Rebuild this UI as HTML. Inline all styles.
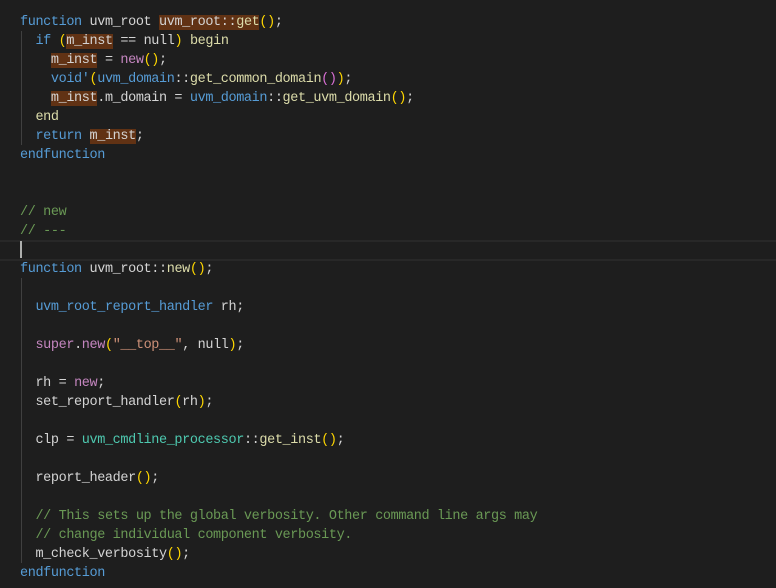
<!DOCTYPE html>
<html><head><style>
body{margin:0;background:#1e1e1e;width:776px;height:588px;overflow:hidden;position:relative}
.c{position:absolute;left:20px;top:13px;font-family:"Liberation Mono",monospace;font-size:13.5px;letter-spacing:-0.38px;line-height:19px;color:#d4d4d4;white-space:pre}
.l{height:19px}
.k{color:#569cd6}.y{color:#dcdcaa}.p{color:#c586c0}.t{color:#4ec9b0}.s{color:#ce9178}.g{color:#6a9955}
.b1{color:#ffd700}.b2{color:#da70d6}.b3{color:#179fff}
.h{background:#613214}
.cur{position:absolute;left:0;right:0;top:240px;height:17px;border-top:2px solid #282828;border-bottom:2px solid #282828}
.caret{position:absolute;left:20px;top:241px;width:2px;height:17px;background:#aeafad}
.ig{position:absolute;left:21px;width:1px;background:#404040}
</style></head><body>
<div class="cur"></div><div class="caret"></div>
<div class="ig" style="top:31px;height:114px"></div>
<div class="ig" style="top:278px;height:285px"></div>
<div class="c"><div class="l"><span class="k">function</span> uvm_root <span class="h">uvm_root::<span class="y">get</span></span><span class="b1">()</span>;</div><div class="l">  <span class="k">if</span> <span class="b1">(</span><span class="h">m_inst</span> == null<span class="b1">)</span> <span class="y">begin</span></div><div class="l">    <span class="h">m_inst</span> = <span class="p">new</span><span class="b1">()</span>;</div><div class="l">    <span class="k">void'</span><span class="b1">(</span><span class="k">uvm_domain</span>::<span class="y">get_common_domain</span><span class="b2">()</span><span class="b1">)</span>;</div><div class="l">    <span class="h">m_inst</span>.m_domain = <span class="k">uvm_domain</span>::<span class="y">get_uvm_domain</span><span class="b1">()</span>;</div><div class="l">  <span class="y">end</span></div><div class="l">  <span class="k">return</span> <span class="h">m_inst</span>;</div><div class="l"><span class="k">endfunction</span></div><div class="l"> </div><div class="l"> </div><div class="l"><span class="g">// new</span></div><div class="l"><span class="g">// ---</span></div><div class="l"> </div><div class="l"><span class="k">function</span> uvm_root::<span class="y">new</span><span class="b1">()</span>;</div><div class="l"> </div><div class="l">  <span class="k">uvm_root_report_handler</span> rh;</div><div class="l"> </div><div class="l">  <span class="p">super</span>.<span class="p">new</span><span class="b1">(</span><span class="s">"__top__"</span>, null<span class="b1">)</span>;</div><div class="l"> </div><div class="l">  rh = <span class="p">new</span>;</div><div class="l">  set_report_handler<span class="b1">(</span>rh<span class="b1">)</span>;</div><div class="l"> </div><div class="l">  clp = <span class="t">uvm_cmdline_processor</span>::<span class="y">get_inst</span><span class="b1">()</span>;</div><div class="l"> </div><div class="l">  report_header<span class="b1">()</span>;</div><div class="l"> </div><div class="l">  <span class="g">// This sets up the global verbosity. Other command line args may</span></div><div class="l">  <span class="g">// change individual component verbosity.</span></div><div class="l">  m_check_verbosity<span class="b1">()</span>;</div><div class="l"><span class="k">endfunction</span></div></div>
</body></html>
